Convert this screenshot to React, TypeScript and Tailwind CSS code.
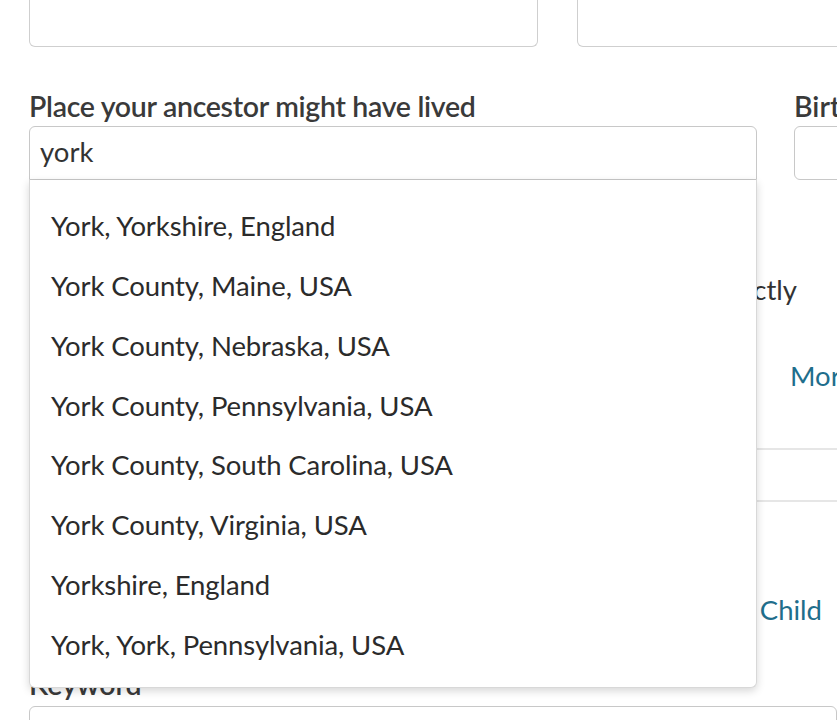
const places = [
  'York, Yorkshire, England',
  'York County, Maine, USA',
  'York County, Nebraska, USA',
  'York County, Pennsylvania, USA',
  'York County, South Carolina, USA',
  'York County, Virginia, USA',
  'Yorkshire, England',
  'York, York, Pennsylvania, USA',
];

export default function App() {
  return (
    <div
      className="relative w-[837px] h-[720px] overflow-hidden bg-white pl-[29px] text-[#333]"
      style={{ fontFamily: 'Lato, "Noto Sans", sans-serif' }}
    >
      {/* Поля сверху, обрезаны краем */}
      <div className="flex gap-[39px]">
        <div className="w-[509px] shrink-0 h-[47px] border border-t-0 border-[#cfcfcf] rounded-b-md" />
        <div className="w-[300px] shrink-0 h-[47px] border border-t-0 border-[#cfcfcf] rounded-b-md" />
      </div>

      {/* Место проживания */}
      <div className="mt-[43px] flex gap-[37px]">
        <div className="relative w-[728px] shrink-0">
          <label className="block text-[28.5px] leading-[32px] font-semibold tracking-[-0.3px] text-[#3a3a3a] whitespace-nowrap">
            Place your ancestor might have lived
          </label>
          <div className="mt-[4px] h-[54px] border border-[#c8c8c8] rounded-t-md flex items-center px-[10px] pb-[2px] text-[27.5px] text-[#333]">
            york
          </div>

          <ul className="absolute left-0 top-[90px] z-10 w-[728px] h-[508px] bg-white border border-[#d8d8d8] border-t-0 rounded-b-md shadow-[0_3px_8px_rgba(0,0,0,0.16)] pt-[16px]">
            {places.map((p) => (
              <li key={p} className="h-[59.8px] flex items-center pl-[21px] text-[27.5px] text-[#2b2b2b] tracking-[-0.1px] whitespace-nowrap">
                {p}
              </li>
            ))}
          </ul>
        </div>
        <div className="shrink-0">
          <label className="block text-[28.5px] leading-[32px] font-semibold text-[#3a3a3a] whitespace-nowrap">
            Birth year
          </label>
          <div className="mt-[4px] w-[200px] h-[54px] border border-[#c8c8c8] rounded-md" />
        </div>
      </div>

      {/* Содержимое под выпадающим списком */}
      <div className="w-[768px] flex justify-end mt-[94px] text-[27.5px] leading-[32px] text-[#333] whitespace-nowrap">
        <span>Match all terms exactly</span>
      </div>
      <div className="mt-[54px] pl-[761px] text-[27.5px] leading-[32px] text-[#1f6e8c] whitespace-nowrap">More</div>
      <div className="mt-[56px] h-[54px] border-y-2 border-[#e6e6e6]" />
      <div className="w-[793px] flex justify-end mt-[92px] text-[27.5px] leading-[32px] text-[#1f6e8c] whitespace-nowrap">
        <span>Add Child</span>
      </div>
      <label className="block mt-[42px] text-[28.5px] leading-[32px] font-semibold text-[#3a3a3a]">Keyword</label>
      <div className="mt-[6px] h-[54px] border border-[#c8c8c8] rounded-t-md" />
    </div>
  );
}
